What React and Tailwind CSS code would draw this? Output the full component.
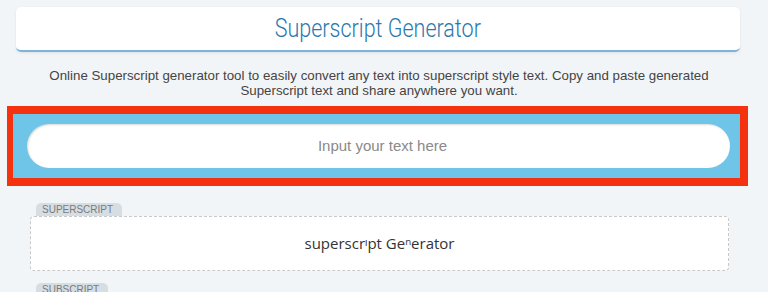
export default function App() {
  return (
    <div className="w-[768px] h-[292px] overflow-hidden bg-[#f2f5f8] flex flex-col" style={{ fontFamily: '"Liberation Sans", Arial, sans-serif' }}>
      <div className="ml-[16px] mt-[7px] w-[724px] h-[45px] shrink-0 bg-white rounded-[5px] border-b-2 border-[#7fb3da] shadow-[0_1px_3px_rgba(0,0,0,0.08)] flex items-center justify-center">
        <h1 className="text-[25px] leading-none font-light text-[#2b78ae] scale-x-[0.86] whitespace-nowrap" style={{ fontFamily: 'Roboto, sans-serif' }}>Superscript Generator</h1>
      </div>
      <p className="mt-[16px] ml-[19px] w-[720px] text-center text-[13.3px] leading-[15px] text-[#444]">
        Online Superscript generator tool to easily convert any text into superscript style text. Copy and paste generated Superscript text and share anywhere you want.
      </p>
      <div className="ml-[7px] mt-[8px] w-[741px] h-[80px] shrink-0 border-[#f5320f] border-t-[8px] border-b-[8px] border-l-[6px] border-r-[8px] bg-[#6ec5e8] pl-[14px] pr-[10px] pt-[10px] pb-[10px]">
        <div className="h-[44px] w-full bg-white rounded-full shadow-[inset_1px_1px_2px_rgba(0,0,0,0.15)] flex items-center justify-center pl-[8px]">
          <span className="text-[15px] text-[#8a8a8a]">Input your text here</span>
        </div>
      </div>
      <div className="ml-[36px] mt-[17px] w-[86px] h-[13px] shrink-0 bg-[#d6dee3] rounded-t-[5px] flex items-center pl-[6px]">
        <span className="text-[10px] leading-none text-[#7a7a7a] uppercase">Superscript</span>
      </div>
      <div className="ml-[30px] w-[699px] h-[55px] shrink-0 bg-white border border-dashed border-[#c8c8c8] rounded-[4px] flex items-center justify-center">
        <span className="text-[15px] text-[#333]" style={{ fontFamily: '"Open Sans", sans-serif' }}>superscrᶦpt Geⁿerator</span>
      </div>
      <div className="ml-[36px] mt-[12px] w-[72px] h-[13px] shrink-0 bg-[#d6dee3] rounded-t-[5px] flex items-center pl-[6px]">
        <span className="text-[10px] leading-none text-[#7a7a7a] uppercase">Subscript</span>
      </div>
    </div>
  );
}
